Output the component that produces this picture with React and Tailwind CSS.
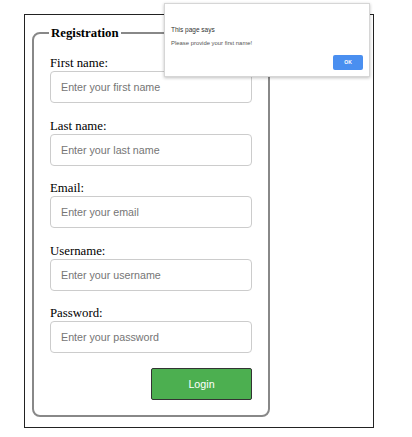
import React from "react";

const fields = [
  { label: "First name:", placeholder: "Enter your first name", type: "text" },
  { label: "Last name:", placeholder: "Enter your last name", type: "text" },
  { label: "Email:", placeholder: "Enter your email", type: "email" },
  { label: "Username:", placeholder: "Enter your username", type: "text" },
  { label: "Password:", placeholder: "Enter your password", type: "password" },
];

// Browser alert overlay
const AlertBox = () => (
  <div className="absolute left-[164px] top-[3px] w-[206px] h-[74px] bg-white border border-[#d6d6d6] shadow-[0_1px_3px_rgba(0,0,0,0.25)] font-['Liberation_Sans',Arial,sans-serif]">
    <div className="pl-[6px] pt-[22px] text-[6.5px] leading-[8px] text-[#333]">
      This page says
    </div>
    <div className="pl-[6px] pt-[6px] text-[5.9px] leading-[7px] text-[#555]">
      Please provide your first name!
    </div>
    <div className="absolute left-[168px] top-[51px] w-[30px] h-[15px] rounded-[2px] bg-[#4a8ff0] flex items-center justify-center text-white text-[5px] font-bold">
      OK
    </div>
  </div>
);

export default function App() {
  return (
    <div className="relative w-[412px] h-[437px] bg-white pt-[14px] pl-[24px]">
      <div className="w-[350px] h-[414px] border border-[#222] pt-[10px] pl-[7px]">
        <fieldset className="w-[238px] border-2 border-[#888] rounded-[8px] px-[16px] pb-[15px] font-['Liberation_Serif','Times_New_Roman',serif]">
          <legend className="-ml-[1px] px-[2px] text-[12.8px] leading-[16px] font-bold text-black">
            Registration
          </legend>
          <form className="pt-[14px]" onSubmit={(e) => e.preventDefault()}>
            {fields.map((f) => (
              <div key={f.label} className="mb-[14.5px]">
                <label className="block text-[12.8px] leading-[16px] text-black">
                  {f.label}
                </label>
                <input
                  type={f.type}
                  placeholder={f.placeholder}
                  className="block w-[202px] h-[32px] border border-[#ccc] rounded-[4px] px-[10px] text-[10.7px] font-['Liberation_Sans',Arial,sans-serif] placeholder:text-[#757575] outline-none"
                />
              </div>
            ))}
            <div className="flex justify-end pt-[0.5px]">
              <button
                type="submit"
                className="w-[101px] h-[32px] bg-[#4caf50] border border-[#333] rounded-[2px] text-white text-[10.7px] font-['Liberation_Sans',Arial,sans-serif]"
              >
                Login
              </button>
            </div>
          </form>
        </fieldset>
      </div>
      <AlertBox />
    </div>
  );
}
